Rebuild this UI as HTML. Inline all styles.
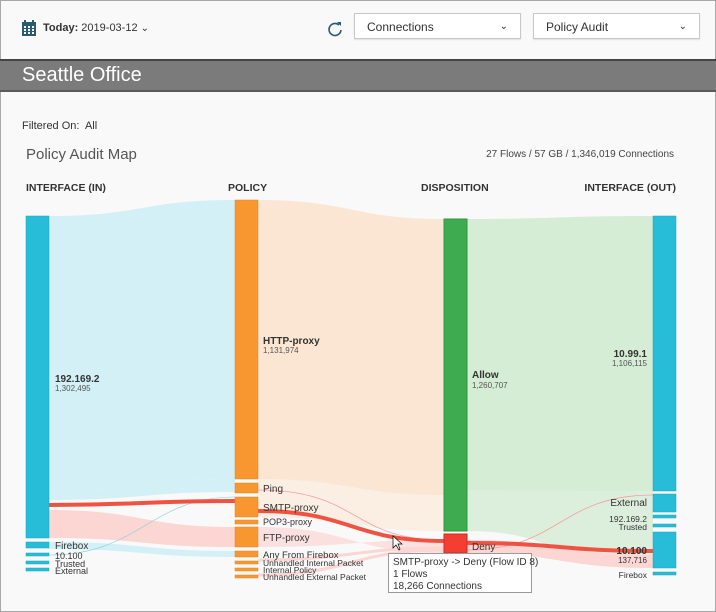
<!DOCTYPE html>
<html><head><style>
html,body{margin:0;padding:0;width:716px;height:612px;overflow:hidden;background:#f9f9f9;font-family:"Liberation Sans",sans-serif}
.frame{position:absolute;left:0;top:0;width:714px;height:610px;border:1px solid #a8a8a8;background:#f9f9f9}
.dd{position:absolute;top:13px;height:26px;background:#fff;border:1px solid #c8c8c8;box-shadow:0 1px 1px rgba(0,0,0,.1);font-size:12px;color:#333;line-height:26px;padding-left:12px;box-sizing:border-box}
.dd span{position:absolute;right:12px;top:0;font-size:10px}
.bar{position:absolute;left:0;top:59px;width:716px;height:33px;background:#7b7b7b;border-top:2px solid #444;border-bottom:2px solid #5a5a5a;box-sizing:border-box}
.bar div{position:absolute;left:22px;top:3px;color:#fff;font-size:20px}
</style></head><body>
<div class="frame"></div>
<svg style="position:absolute;left:22px;top:20px" width="14" height="16" viewBox="0 0 14 16"><rect x="0" y="2" width="14" height="14" fill="#2a5a7a"/><rect x="2" y="0" width="2" height="4" fill="#2a5a7a"/><rect x="10" y="0" width="2" height="4" fill="#2a5a7a"/><g fill="#fff"><rect x="2" y="6" width="2" height="2"/><rect x="6" y="6" width="2" height="2"/><rect x="10" y="6" width="2" height="2"/><rect x="2" y="9" width="2" height="2"/><rect x="6" y="9" width="2" height="2"/><rect x="10" y="9" width="2" height="2"/><rect x="2" y="12" width="2" height="2"/><rect x="6" y="12" width="2" height="2"/><rect x="10" y="12" width="2" height="2"/></g></svg>
<div style="position:absolute;left:43px;top:22px;font-size:11px;color:#333"><b>Today:</b> 2019-03-12 <span style="font-size:10px">&#8964;</span></div>
<svg style="position:absolute;left:327px;top:20px" width="16" height="18" viewBox="0 0 16 18"><path d="M12 5 A6 6 0 1 0 14 10" fill="none" stroke="#2a5a7a" stroke-width="1.6"/><path d="M10 2 L14 2 L14 6 Z" fill="#2a5a7a"/></svg>
<div class="dd" style="left:354px;width:167px">Connections<span>&#8964;</span></div>
<div class="dd" style="left:533px;width:167px">Policy Audit<span>&#8964;</span></div>
<div class="bar"><div>Seattle Office</div></div>
<div style="position:absolute;left:22px;top:120px;font-size:11px;color:#333">Filtered On:&nbsp; All</div>
<div style="position:absolute;left:26px;top:146px;font-size:15px;color:#555">Policy Audit Map</div>
<div style="position:absolute;right:42px;top:149px;font-size:10px;color:#444">27 Flows / 57 GB / 1,346,019 Connections</div>
<svg style="position:absolute;left:0;top:0" width="716" height="612" font-family="Liberation Sans, sans-serif">
<g font-size="10.5" font-weight="bold" fill="#333"><text x="26" y="191">INTERFACE (IN)</text><text x="228" y="191">POLICY</text><text x="421" y="191">DISPOSITION</text><text x="676" y="191" text-anchor="end">INTERFACE (OUT)</text></g>
<path d="M49 216 C142 216,142 200,235 200 L235 479 C142 479,142 490,49 490Z" fill="#d3f0f6"/>
<path d="M258 200 C351 200,351 219,444 219 L444 495 C351 495,351 479,258 479Z" fill="#fbe6d4"/>
<path d="M258 479 C351 479,351 495,444 495 L444 531 C351 531,351 517,258 517Z" fill="#fbe6d4" opacity=".6"/>
<path d="M467 219 C560 219,560 216,653 216 L653 491 C560 491,560 490,467 490Z" fill="#d5ecd5"/>
<path d="M467 489 C560 489,560 490,653 490 L653 568 C560 568,560 531,467 531Z" fill="#d5ecd5" opacity=".8"/>
<path d="M49 490 C142 490,142 479,235 479 L235 492 C142 492,142 500,49 500Z" fill="#d3f0f6"/>
<path d="M49 510 C142 510,142 527,235 527 L235 547 C142 547,142 538,49 538Z" fill="#fbd6d3"/>
<path d="M49 542 C142 542,142 551,235 551 L235 557 C142 557,142 549,49 549Z" fill="#d3f0f6"/>
<path d="M258 527 C351 527,351 553,444 553 L444 540 C351 540,351 547,258 547Z" fill="#fbd6d3" opacity=".7"/>
<path d="M467 540 C560 540,560 555,653 555 L653 568 C560 568,560 553,467 553Z" fill="#fbd6d3"/>
<path d="M258 560 C351 560,351 548,444 548 M258 575 C351 575,351 550,444 550" stroke="#fbd6d3" stroke-width="3" fill="none"/>
<path d="M49 555 C140 555,150 497,235 497" stroke="#7fd0e4" stroke-width=".6" fill="none"/>
<path d="M258 490 C360 490,350 540,444 540" stroke="#f4a0a0" stroke-width=".8" fill="none"/>
<path d="M467 550 C560 550,560 495,653 495" stroke="#f4a0a0" stroke-width=".8" fill="none"/>
<path d="M49 505 C142 505,142 501,235 501" stroke="#f05242" stroke-width="4" fill="none"/>
<path d="M258 511 C351 511,351 541,444 541" stroke="#f05242" stroke-width="4" fill="none"/>
<path d="M467 543 C560 543,560 551,653 551" stroke="#f05242" stroke-width="4" fill="none"/>
<g fill="#27bcd8" stroke="#1aa5c0" stroke-width=".5">
<rect x="26" y="216" width="23" height="322"/><rect x="26" y="542" width="23" height="6"/><rect x="26" y="553" width="23" height="3"/><rect x="26" y="561" width="23" height="3"/><rect x="26" y="568" width="23" height="3"/>
<rect x="653" y="216" width="23" height="275"/><rect x="653" y="494" width="23" height="18"/><rect x="653" y="515" width="23" height="3"/><rect x="653" y="524" width="23" height="3"/><rect x="653" y="532" width="23" height="36"/><rect x="653" y="572" width="23" height="3"/></g>
<g fill="#f8972f" stroke="#e88520" stroke-width=".5">
<rect x="235" y="200" width="23" height="279"/><rect x="235" y="483" width="23" height="10"/><rect x="235" y="497" width="23" height="20"/><rect x="235" y="520" width="23" height="4"/><rect x="235" y="527" width="23" height="20"/><rect x="235" y="551" width="23" height="6"/><rect x="235" y="561" width="23" height="3"/><rect x="235" y="568" width="23" height="3"/><rect x="235" y="575" width="23" height="3"/></g>
<rect x="444" y="219" width="23" height="312" fill="#3fab50" stroke="#2c9a3d"/>
<rect x="444" y="534" width="23" height="19" fill="#f43e33" stroke="#d02a20"/>
<g fill="#333" font-size="10">
<text x="55" y="382" font-weight="bold">192.169.2</text><text x="55" y="391" font-size="8" fill="#555">1,302,495</text>
<text x="263" y="344" font-weight="bold">HTTP-proxy</text><text x="263" y="353" font-size="8" fill="#555">1,131,974</text>
<text x="472" y="378" font-weight="bold">Allow</text><text x="472" y="388" font-size="8" fill="#555">1,260,707</text>
<text x="647" y="357" font-weight="bold" text-anchor="end">10.99.1</text><text x="647" y="366" font-size="8" fill="#555" text-anchor="end">1,106,115</text>
<text x="55" y="549">Firebox</text><text x="55" y="559" font-size="9">10.100</text><text x="55" y="567" font-size="9">Trusted</text><text x="55" y="574" font-size="9">External</text>
<text x="263" y="492">Ping</text><text x="263" y="511">SMTP-proxy</text><text x="263" y="525" font-size="9">POP3-proxy</text><text x="263" y="541">FTP-proxy</text><text x="263" y="558" font-size="9.5">Any From Firebox</text>
<text x="263" y="566" font-size="8.5">Unhandled Internal Packet</text><text x="263" y="573" font-size="8.5">Internal Policy</text><text x="263" y="580" font-size="8.5">Unhandled External Packet</text>
<text x="472" y="550">Deny</text>
<text x="647" y="506" text-anchor="end">External</text><text x="647" y="522" font-size="8.5" text-anchor="end">192.169.2</text><text x="647" y="530" font-size="8.5" text-anchor="end">Trusted</text>
<text x="647" y="554" font-weight="bold" text-anchor="end">10.100</text><text x="647" y="563" font-size="8" text-anchor="end">137,716</text><text x="647" y="578" font-size="8.5" text-anchor="end">Firebox</text></g>
<path d="M393 536 L393 548 L396 545 L399 550 L400 549 L398 544 L402 544Z" fill="#fff" stroke="#000" stroke-width=".7"/>
<rect x="388.5" y="553.5" width="143" height="39" fill="#fff" stroke="#999"/>
<g font-size="10" fill="#333"><text x="393" y="565">SMTP-proxy -&gt; Deny (Flow ID 8)</text><text x="393" y="577">1 Flows</text><text x="393" y="589">18,266 Connections</text></g>
</svg>
</body></html>
